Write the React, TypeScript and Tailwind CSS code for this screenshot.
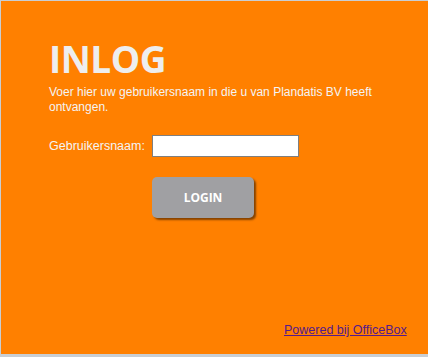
export default function App() {
  return (
    <div className="w-[428px] h-[357px] bg-[#c9ced3] pt-px pl-px overflow-hidden">
      <div className="w-[427px] h-[353px] bg-[#ff8000] relative font-['Liberation_Sans',Arial,sans-serif]">
        <div className="pt-[36px] pl-[48px] w-[400px]">
          <h1 className="font-['Open_Sans',sans-serif] font-bold text-[37px] leading-[44px] text-[#eeeeee] tracking-[-0.5px]">
            INLOG
          </h1>
          <p className="text-[12px] leading-[15px] text-[#f4f4f4] mt-[4px] w-[336px]">
            Voer hier uw gebruikersnaam in die u van Plandatis BV heeft ontvangen.
          </p>

          <div className="flex items-center mt-[20px]">
            <label className="text-[12.5px] text-[#f4f4f4] w-[103px]">Gebruikersnaam:</label>
            <input
              type="text"
              className="w-[147px] h-[22px] bg-white border border-[#7f7f7f] outline-none"
            />
          </div>

          <div className="pl-[103px] mt-[20px]">
            <button className="w-[102px] h-[41px] rounded-[5px] bg-[#a0a0a3] text-white font-['Open_Sans',sans-serif] font-bold text-[12px] shadow-[2px_2px_2px_rgba(80,40,0,0.7)]">
              LOGIN
            </button>
          </div>
        </div>

        <a href="#" className="absolute left-[283px] top-[320px] text-[12.5px] text-[#551a8b] underline">
          Powered bij OfficeBox
        </a>
      </div>
    </div>
  );
}
